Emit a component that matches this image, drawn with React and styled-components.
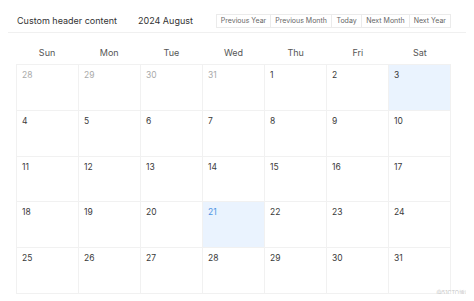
import React from "react";
import styled, { createGlobalStyle } from "styled-components";

const GlobalStyle = createGlobalStyle`
    body {
        margin: 8px;
        background: #fff;
        font-family: Inter, "Noto Sans", sans-serif;
        color: #333;
    }
`;

const Page = styled.div`
    position: relative;
    width: 458px;
`;

const Header = styled.div`
    height: 25px;
    display: flex;
    align-items: center;
    border-bottom: 1px solid #f0f0f0;
    box-sizing: border-box;
    padding: 0 15px 0 9px;
`;

const Title = styled.span`
    font-size: 9px;
    color: #333;
    width: 121px;
`;

const MonthLabel = styled.span`
    font-size: 9px;
    color: #333;
`;

const ButtonGroup = styled.div`
    display: flex;
    height: 14px;
    margin-top: 2px;
    margin-left: auto;
`;

const NavButton = styled.button`
    font-family: Inter, "Noto Sans", sans-serif;
    font-size: 7px;
    color: #666;
    background: #fff;
    border: 1px solid #ebebeb;
    margin-left: -1px;
    padding: 0 ${(props) => props.pad}px;
    height: 14px;
    line-height: 12px;
    cursor: pointer;
`;

const Body = styled.div`
    padding-left: 8px;
    width: 435px;
`;

const WeekRow = styled.div`
    display: grid;
    grid-template-columns: repeat(7, 1fr);
    height: 31px;
    padding-top: 8px;
    box-sizing: border-box;
    align-items: center;
`;

const WeekDay = styled.div`
    text-align: center;
    font-size: 9px;
    color: #555;
`;

const Grid = styled.div`
    display: grid;
    grid-template-columns: repeat(7, 1fr);
    grid-template-rows: repeat(5, 1fr);
    height: 230px;
    border-top: 1px solid #f1f1f1;
    border-left: 1px solid #f1f1f1;
    box-sizing: border-box;
`;

const Cell = styled.div`
    border-right: 1px solid #f1f1f1;
    border-bottom: 1px solid #f1f1f1;
    background: ${(props) => (props.active ? "#eaf3fe" : "#fff")};
    padding: 5px 5px;
    font-size: 8.5px;
    color: ${(props) => (props.muted ? "#aaa" : props.today ? "#4f93e3" : "#3a3a3a")};
`;

const Watermark = styled.span`
    position: absolute;
    right: -4px;
    top: 281px;
    font-size: 5.5px;
    color: #c8c8c8;
    font-family: Inter, "Noto Sans CJK SC", sans-serif;
`;

const days = ["Sun", "Mon", "Tue", "Wed", "Thu", "Fri", "Sat"];

const buttons = [
    { label: "Previous Year", pad: 4 },
    { label: "Previous Month", pad: 4 },
    { label: "Today", pad: 4.5 },
    { label: "Next Month", pad: 4 },
    { label: "Next Year", pad: 4 },
];

const cells = [
    ...[28, 29, 30, 31].map((d) => ({ d, muted: true })),
    ...Array.from({ length: 31 }, (_, i) => ({ d: i + 1 })),
];

const App = () => {
    return (
        <Page>
            <GlobalStyle />
            <Header>
                <Title>Custom header content</Title>
                <MonthLabel>2024 August</MonthLabel>
                <ButtonGroup>
                    {buttons.map((b) => (
                        <NavButton key={b.label} pad={b.pad}>{b.label}</NavButton>
                    ))}
                </ButtonGroup>
            </Header>
            <Body>
                <WeekRow>
                    {days.map((d) => (
                        <WeekDay key={d}>{d}</WeekDay>
                    ))}
                </WeekRow>
                <Grid>
                    {cells.map((c, idx) => (
                        <Cell
                            key={idx}
                            muted={c.muted}
                            active={!c.muted && (c.d === 3 || c.d === 21)}
                            today={!c.muted && c.d === 21}
                        >
                            {c.d}
                        </Cell>
                    ))}
                </Grid>
            </Body>
            <Watermark>@51CTO博客</Watermark>
        </Page>
    );
};

export default App;
